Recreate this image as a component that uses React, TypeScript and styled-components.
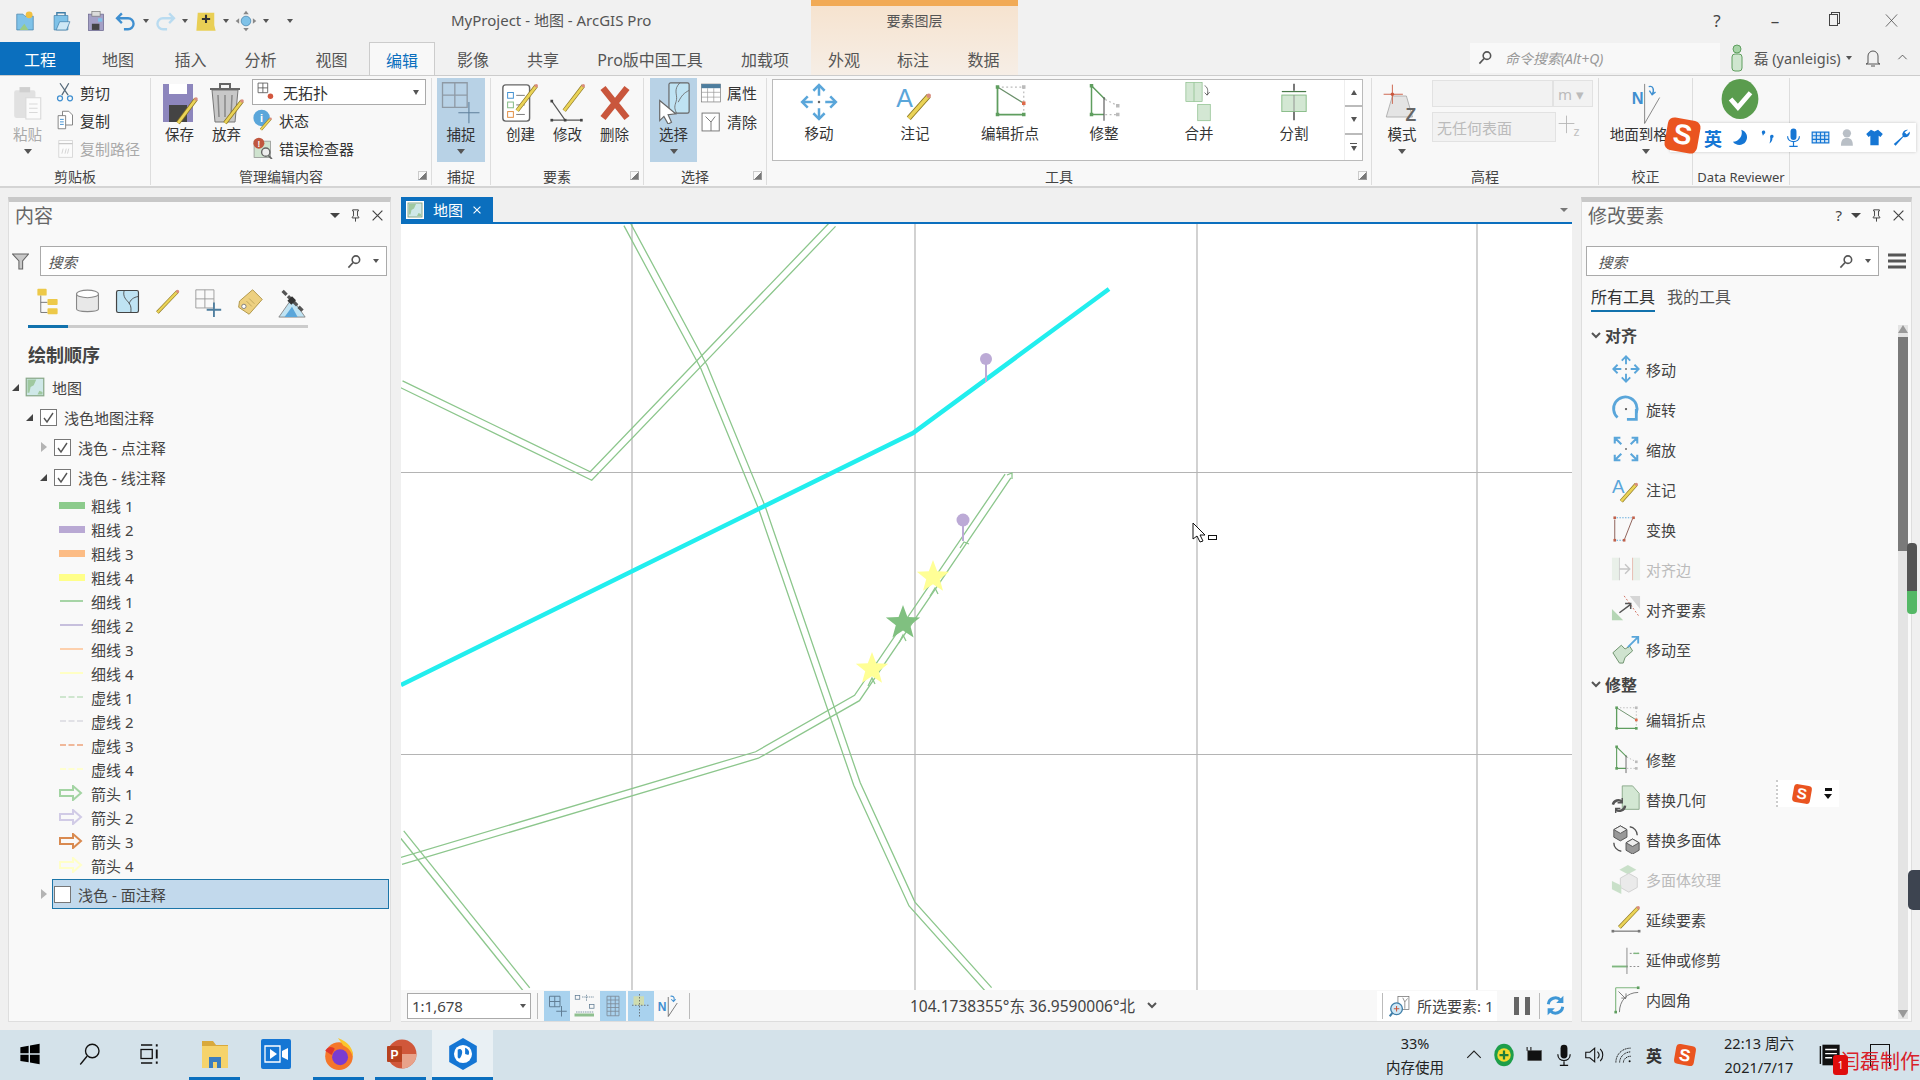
import React from 'react';
import styled, { createGlobalStyle } from 'styled-components';

const Global = createGlobalStyle`
	html, body { margin: 0; padding: 0; background: #f0f0f0; }
	* { box-sizing: border-box; }
	body { font-family: "Noto Sans", "Noto Sans CJK SC", sans-serif; color: #444; overflow: hidden; }
`;

const Screen = styled.div`
	position: relative;
	width: 1920px;
	height: 1080px;
	display: flex;
	flex-direction: column;
	overflow: hidden;
	background: #f0f0f0;
`;

const Gap = styled.span<{ $w: number }>`
	width: ${(p) => p.$w}px;
	flex: none;
`;

/* ---- drawings ---- */
const BLUE = '#5aa6da';
const GREEN = '#7fb77f';
const pen = (x1: number, y1: number, x2: number, y2: number) => (
	<g>
		<line x1={x1} y1={y1} x2={x2} y2={y2} stroke="#8a7420" strokeWidth="4.2" />
		<line x1={x1} y1={y1} x2={x2} y2={y2} stroke="#ead357" strokeWidth="2.8" />
		<circle cx={x2} cy={y2} r="1.8" fill="#d98d7e" />
	</g>
);
const node = (x: number, y: number, c = '#5f9e5f') => <rect x={x - 1.4} y={y - 1.4} width="2.8" height="2.8" fill={c} />;

const glyphs: Record<string, React.ReactNode> = {
	move: (
		<g stroke={BLUE} strokeWidth="2" fill="none">
			<path d="M16 3v8M16 21v8M3 16h8M21 16h8" />
			<path d="M11.5 7L16 2.5 20.5 7M11.5 25L16 29.5 20.5 25M7 11.5L2.5 16 7 20.5M25 11.5L29.5 16 25 20.5" />
			<circle cx="16" cy="16" r="1" fill="#666" stroke="none" />
		</g>
	),
	rotate: (
		<g fill="none" stroke={BLUE} strokeWidth="3">
			<path d="M7 25A12.5 12.5 0 1 1 27 20" />
			<path d="M27 16v11h-10" />
			<circle cx="16" cy="16" r="1.2" fill="#555" stroke="none" />
		</g>
	),
	scale: (
		<g fill="none" stroke={BLUE} strokeWidth="2.2">
			<path d="M4 10V4h6M4 4l7 7M22 4h6v6M28 4l-7 7M4 22v6h6M4 28l7-7M22 28h6v-6M28 28l-7-7" />
			<circle cx="16" cy="16" r="1" fill="#666" stroke="none" />
		</g>
	),
	note: (
		<g>
			<text x="1" y="20" fontSize="20" fill={BLUE}>A</text>
			{pen(11, 29, 27, 11)}
		</g>
	),
	warp: (
		<g fill="none">
			<path d="M4 6v22M23 5l-9 23" stroke="#8a5b52" strokeWidth="1" />
			<path d="M6 4h16M6 28h8" stroke={BLUE} strokeDasharray="1.5 1.5" />
			{node(4, 4, '#c0604a')}{node(24, 4, '#c0604a')}{node(4, 28, '#c0604a')}{node(14, 28, '#c0604a')}
		</g>
	),
	alignEdge: (
		<g opacity=".45">
			<rect x="1" y="4" width="8" height="24" fill="#d7e7d7" />
			<rect x="23" y="4" width="8" height="24" fill="#d7e7d7" />
			<path d="M9 4v24" stroke="#999" />
			<path d="M23 4v24" stroke="#d2705a" />
			<path d="M9 16h11M15 11l5 5-5 5" stroke="#888" fill="none" strokeWidth="1.5" />
		</g>
	),
	alignFeature: (
		<g>
			<path d="M1 16l12 12H1z" fill="#b5d6b5" />
			<path d="M20 2h11v14z" fill="#d6d6d6" />
			<path d="M14 2l16 22" stroke="#cf6a5a" strokeDasharray="2 2" fill="none" />
			<path d="M9 20l12-9M15 10h6v6" stroke="#555" strokeWidth="1.6" fill="none" />
		</g>
	),
	moveTo: (
		<g>
			<path d="M2 20l9-8 4 4 5-3 3 5-8 7-2 6h-4z" fill="#cfe3cf" stroke="#6a8f6a" />
			<path d="M18 14l11-11M22 3h7v7" stroke={BLUE} strokeWidth="2" fill="none" />
		</g>
	),
	vertices: (
		<g fill="none">
			<path d="M6 4v22h21" stroke="#5f9e5f" strokeWidth="1.4" />
			<path d="M6 4l21 13" stroke="#6a8f6a" />
			<path d="M6 4h21v22" stroke="#bbb" strokeDasharray="1.5 2" />
			{node(6, 4)}{node(6, 26)}{node(27, 26)}{node(27, 4, '#bbb')}{node(27, 17, '#de6a4a')}
		</g>
	),
	reshape: (
		<g fill="none">
			<path d="M6 3v23h10M6 3l11 11" stroke="#5f9e5f" strokeWidth="1.2" />
			<path d="M16 12v19" stroke="#666" />
			<path d="M17 14l10 5M17 26h10" stroke="#bbb" strokeDasharray="1.5 2" />
			{node(6, 3)}{node(6, 26)}{node(27, 26, '#bbb')}{node(27, 19, '#bbb')}
		</g>
	),
	replaceGeom: (
		<g>
			<path d="M12 2h11l7 8v17H12z" fill="#d3e7d3" stroke="#8aa98a" />
			<path d="M2 22a6 6 0 0 1 10-3M15 23a6 6 0 0 1-10 4" stroke="#555" strokeWidth="2.6" fill="none" />
			<path d="M12 15v5h-5M5 31v-5h5" stroke="#555" strokeWidth="1.5" fill="none" />
		</g>
	),
	cubes: (
		<g>
			<path d="M3 6l7-4 7 4v8l-7 4-7-4z" fill="#999" stroke="#555" />
			<path d="M3 6l7 4 7-4-7-4z" fill="#eee" stroke="#555" />
			<path d="M16 20l7-4 7 4v8l-7 4-7-4z" fill="#999" stroke="#555" />
			<path d="M16 20l7 4 7-4-7-4z" fill="#eee" stroke="#555" />
			<path d="M20 3a9 9 0 0 1 8 9M11 29a9 9 0 0 1-8-9" stroke="#555" strokeWidth="1.5" fill="none" />
		</g>
	),
	texture: (
		<g opacity=".5">
			<path d="M18 1l9 5-9 5-9-5z" fill="#9bc99b" />
			<path d="M10 15l9-5 9 5v10l-9 5-9-5z" fill="#ddd" stroke="#aaa" />
			<path d="M1 18l10 5v9L1 27z" fill="#9bc99b" />
		</g>
	),
	cont: (
		<g>
			<path d="M1 29h30" stroke="#888" strokeWidth="1.5" />
			{node(2, 29, '#777')}{node(30, 29, '#777')}
			{pen(9, 25, 29, 4)}
		</g>
	),
	extend: (
		<g fill="none">
			<path d="M1 24h17" stroke={GREEN} strokeWidth="2" />
			<path d="M17 4v28" stroke="#888" />
			<path d="M20 10h10M20 24h10" stroke="#888" strokeDasharray="2 2" />
			<path d="M24 10h6" stroke={GREEN} strokeWidth="1.5" />
		</g>
	),
	fillet: (
		<g fill="none">
			<path d="M5 4v26M5 4h24" stroke={GREEN} strokeWidth="1.2" />
			<path d="M9 30c0-12 8-21 20-21" stroke="#777" />
			<path d="M8 8l8 8M11 15h5v-5" stroke="#777" />
			{node(5, 30)}{node(29, 4)}
		</g>
	),
	qNew: (
		<g>
			<path d="M4 6h9l3 3h12v20H4z" fill="#7fc2e8" stroke="#3f7ea8" />
			<circle cx="22" cy="7" r="5" fill="#f0c040" />
			<path d="M8 29l7-9 6 9z" fill="#9acb86" />
		</g>
	),
	qOpen: (
		<g>
			<path d="M6 8h20v21H6z" fill="#7fc2e8" stroke="#3f7ea8" />
			<path d="M10 8V4h12v4" fill="none" stroke="#3f7ea8" strokeWidth="2" />
			<path d="M9 29l5-12h15l-5 12z" fill="#cfe8f6" stroke="#3f7ea8" />
		</g>
	),
	qSave: (
		<g>
			<rect x="5" y="6" width="22" height="24" fill="#a4a0c6" stroke="#68648c" />
			<rect x="10" y="2" width="12" height="7" fill="#dcdcdc" stroke="#777" />
			<rect x="10" y="20" width="11" height="9" fill="#444" />
			<rect x="19" y="12" width="6" height="5" fill="#7fc2e8" />
		</g>
	),
	undo: <path d="M4 12h15a8 8 0 0 1 0 16h-6M10 5L3 12l7 7" fill="none" stroke="#3f8fd0" strokeWidth="3.4" />,
	redo: <path d="M28 12H13a8 8 0 0 0 0 16h6M22 5l7 7-7 7" fill="none" stroke="#b9dbf0" strokeWidth="3.4" />,
	qAdd: (
		<g>
			<path d="M4 4h24v18l2 8H2z" fill="#e9cf55" />
			<path d="M16 7v12M10 13h12" stroke="#333" strokeWidth="3" />
		</g>
	),
	qNav: (
		<g>
			<circle cx="16" cy="16" r="7" fill="#7fc2e8" stroke="#3f7ea8" />
			<path d="M16 1l-4 5h8zM16 31l-4-5h8zM1 16l5-4v8zM31 16l-5-4v8z" fill="#888" />
		</g>
	),
	paste: (
		<g opacity=".5">
			<rect x="3" y="4" width="20" height="26" rx="2" fill="#ccc" />
			<rect x="8" y="1" width="10" height="5" fill="#aaa" />
			<path d="M14 11h14v20H14z" fill="#fff" stroke="#bbb" />
			<path d="M17 17h8M17 21h8M17 25h8" stroke="#bbb" />
		</g>
	),
	cut: (
		<g fill="none" stroke="#566a7a" strokeWidth="2">
			<path d="M8 2l13 19M22 2L11 21" />
			<circle cx="8" cy="26" r="4" stroke="#3f8fd0" />
			<circle cx="24" cy="26" r="4" stroke="#3f8fd0" />
		</g>
	),
	copy: (
		<g>
			<path d="M12 2h10l6 6v16H12z" fill="#fff" stroke="#777" strokeWidth="1.4" />
			<path d="M5 9h12v21H5z" fill="#fff" stroke="#777" strokeWidth="1.4" />
			<path d="M8 15h6M8 19h6M8 23h6" stroke="#3f8fd0" strokeWidth="1.5" />
		</g>
	),
	copyPath: (
		<g opacity=".5">
			<path d="M6 4h22v27H6z" fill="#fff" stroke="#999" />
			<path d="M6 9h22" stroke="#999" strokeWidth="2" />
			<path d="M11 25l2-8M16 25l2-8M20 25l2-8" stroke="#888" />
		</g>
	),
	save: (
		<g>
			<path d="M2 3h30v38H2z" fill="#8d86bd" />
			<rect x="8" y="3" width="18" height="10" fill="#fff" />
			<rect x="8" y="24" width="18" height="17" fill="#444" />
			{pen(17, 42, 35, 18)}
		</g>
	),
	discard: (
		<g>
			<path d="M4 9h26l-3 32H7z" fill="#c8c8c8" stroke="#777" />
			<path d="M2 8h30M12 8V3h10v5" stroke="#666" strokeWidth="2" fill="none" />
			<path d="M10 14l1 22M17 14v22M24 14l-1 22" stroke="#888" strokeWidth="1.5" />
			{pen(17, 42, 34, 20)}
		</g>
	),
	topo: (
		<g fill="none">
			<path d="M3 3h14v14H3zM3 10h14M10 3v14" stroke="#555" strokeWidth="1.2" />
			<circle cx="21" cy="22" r="4" fill="#d2573f" />
		</g>
	),
	status: (
		<g>
			<circle cx="14" cy="13" r="12" fill="#5aa6da" />
			<text x="14" y="19" textAnchor="middle" fontSize="16" fill="#fff" fontWeight="700">i</text>
			{pen(13, 30, 27, 14)}
		</g>
	),
	errInsp: (
		<g>
			<rect x="3" y="6" width="24" height="24" fill="#cfe3cf" stroke="#888" />
			<circle cx="10" cy="9" r="8" fill="#c0573f" />
			<text x="10" y="14" textAnchor="middle" fontSize="12" fill="#fff" fontWeight="700">!</text>
			<circle cx="20" cy="22" r="6" fill="#eee" stroke="#666" strokeWidth="2" />
			<path d="M24 27l5 5" stroke="#666" strokeWidth="2.5" />
		</g>
	),
	snap: (
		<g fill="none" stroke="#8e9aa5" strokeWidth="1.5">
			<path d="M2 2h28v28H2zM16 2v28M2 16h28" />
			<path d="M32 24v24M20 36h24" stroke="#5d7f9b" strokeWidth="1.2" />
		</g>
	),
	create: (
		<g>
			<rect x="1" y="3" width="28" height="38" rx="3" fill="#fff" stroke="#666" strokeWidth="1.5" />
			<rect x="6" y="11" width="6" height="6" fill="none" stroke="#3f8fd0" />
			<rect x="6" y="21" width="6" height="6" fill="none" stroke={GREEN} />
			<rect x="6" y="31" width="6" height="6" fill="none" stroke="#e08a3c" />
			<path d="M15 14h9M15 24h9M15 34h9" stroke="#777" />
			{pen(16, 30, 36, 4)}
		</g>
	),
	modify: (
		<g>
			<path d="M3 20l14 20h17M3 40h14" stroke="#555" strokeWidth="1.2" fill="none" />
			{node(3, 20, '#444')}{node(17, 40, '#444')}{node(34, 40, '#444')}{node(3, 40, '#444')}
			{pen(16, 30, 36, 4)}
		</g>
	),
	del: <path d="M6 6l24 30M30 6L6 36" stroke="#c9563c" strokeWidth="6.5" />,
	select: (
		<g>
			<rect x="13" y="1" width="24" height="36" rx="2" fill="#bfe3f3" stroke="#666" strokeWidth="1.4" />
			<path d="M26 1c-8 8-3 14-4 20s-4 8 0 16M37 10c-6 3-9 6-13 14" stroke="#666" fill="none" />
			<path d="M2 22l19 16-9 1 4 9-4 2-5-9-5 5z" fill="#fff" stroke="#666" strokeWidth="1.4" />
		</g>
	),
	attr: (
		<g>
			<rect x="2" y="3" width="28" height="26" fill="#fff" stroke="#777" />
			<rect x="2" y="3" width="28" height="6" fill="#4d7d9e" />
			<path d="M2 15h28M2 22h28M11 9v20M20 9v20" stroke="#999" />
		</g>
	),
	clear: (
		<g fill="none" stroke="#777" strokeWidth="1.4">
			<rect x="3" y="3" width="25" height="26" fill="#fff" />
			<path d="M8 8l8 8 6-8M16 16v13" />
		</g>
	),
	merge: (
		<g>
			<rect x="1" y="1" width="26" height="30" fill="#d3e7d3" stroke={GREEN} />
			<path d="M14 1v30" stroke={GREEN} />
			<rect x="20" y="36" width="20" height="26" fill="#d3e7d3" stroke={GREEN} />
			<path d="M31 6c5 2 6 8 4 15M31 17l4 4 4-5" stroke="#444" strokeWidth="1.2" fill="none" />
		</g>
	),
	split: (
		<g>
			<path d="M16 2v8M16 44v-10" stroke="#666" strokeWidth="2" />
			<path d="M2 11h28" stroke="#4a7a4a" strokeWidth="1.4" />
			<rect x="2" y="15" width="28" height="19" fill="#d3e7d3" stroke={GREEN} />
			<path d="M16 15v19" stroke="#888" />
		</g>
	),
	mode: (
		<g>
			<path d="M4 40L11 16h16l7 24z" fill="#e4e4e4" stroke="#aaa" />
			<path d="M11 3v22M1 14h22" stroke="#c9563c" />
			<circle cx="11" cy="14" r="2" fill="#c9563c" />
			<text x="32" y="44" fontSize="20" fontWeight="700" fill="#666" textAnchor="middle">Z</text>
		</g>
	),
	ground: (
		<g>
			<text x="1" y="32" fontSize="24" fontWeight="700" fill="#3f8fd0">N</text>
			<path d="M20 60V2M20 60L42 22" stroke="#555" fill="none" />
			<path d="M26 6c6-2 9 4 5 12M27 12l4 6 5-4" stroke="#3f8fd0" strokeWidth="2" fill="none" />
		</g>
	),
	check: (
		<g>
			<ellipse cx="18" cy="20" rx="17.5" ry="19" fill="#5a9c4e" />
			<path d="M9 20l7 8 12-14" stroke="#fff" strokeWidth="4.5" fill="none" />
		</g>
	),
	zSurface: (
		<g stroke="#999" fill="none" opacity=".7">
			<path d="M12 3v20M3 12h18" />
			<text x="20" y="26" fontSize="14" fill="#aaa" stroke="none">z</text>
		</g>
	),
	tree: (
		<g>
			<rect x="4" y="1" width="11" height="8" rx="1" fill="#edc949" />
			<path d="M8 9v20h8M8 17h8" stroke="#666" fill="none" />
			<rect x="16" y="13" width="12" height="7" rx="1" fill="#edc949" />
			<rect x="16" y="24" width="12" height="7" rx="1" fill="#edc949" />
		</g>
	),
	db: (
		<g fill="#fff" stroke="#888" strokeWidth="1.3">
			<path d="M3 7v18c0 4 26 4 26 0V7" fill="#e8e8e8" />
			<ellipse cx="16" cy="7" rx="13" ry="4.5" />
		</g>
	),
	mapTab: (
		<g>
			<rect x="3" y="3" width="26" height="26" rx="2" fill="#bfe3f3" stroke="#444" strokeWidth="1.4" />
			<path d="M12 3c-2 8 3 11 6 15s2 8 2 11M29 10c-6 1-10 4-11 9" stroke="#444" fill="none" />
		</g>
	),
	penTab: pen(4, 29, 28, 4),
	snapPlus: (
		<g>
			<path d="M2 2h20v20H2zM12 2v20M2 12h20" fill="none" stroke="#999" />
			<path d="M22 16v16M14 24h16" stroke="#4d7d9e" strokeWidth="2" />
		</g>
	),
	tag: (
		<g>
			<path d="M19 2l11 11-15 17L3 22l1-7z" fill="#edd080" stroke="#a98f3f" />
			<circle cx="9" cy="21" r="2.5" fill="#fff" stroke="#777" />
			<path d="M15 12l6 6M12 15l6 6" stroke="#b9a259" />
		</g>
	),
	sat: (
		<g>
			<path d="M2 31L16 11l14 20z" fill="#bfe3f3" stroke="#888" />
			<path d="M8 31l8-11 6 11z" fill="#5aa6da" />
			<path d="M6 3l22 22" stroke="#555" strokeWidth="3.5" strokeDasharray="6 2" />
			<rect x="13" y="10" width="6" height="7" transform="rotate(45 16 13)" fill="#333" />
		</g>
	),
	mapThumb: (
		<g>
			<rect x="2" y="2" width="28" height="28" fill="#cfe8e8" stroke="#8aa98a" strokeWidth="2" />
			<path d="M4 4h14l-4 9-5 3-2 9H4z" fill="#9fc89f" />
			<path d="M20 28l3-6 5 2v4z" fill="#9fc89f" />
		</g>
	),
	filter: <path d="M1 2h30L20 15v15h-7V15z" fill="#c8c8c8" stroke="#666" strokeWidth="2" />,
	search: (
		<g fill="none" stroke="#555" strokeWidth="3.4">
			<circle cx="19" cy="12" r="8" />
			<path d="M13 18L3 29" />
		</g>
	),
	pin: <path d="M9 2h14v3h-2v12l3 3v2H8v-2l3-3V5H9zM16 22v9" fill="#f5f5f5" stroke="#444" strokeWidth="2.4" />,
	close: <path d="M4 4l24 24M28 4L4 28" stroke="#444" strokeWidth="3" />,
	closeThin: <path d="M4 3l24 26M28 3L4 29" stroke="#444" strokeWidth="1.6" />,
	closeWhite: <path d="M5 5l22 22M27 5L5 27" stroke="#fff" strokeWidth="3.5" />,
	statSnap: (
		<g fill="none" stroke="#5f7b92" strokeWidth="1.3">
			<path d="M6 3h14v14H6zM13 3v14M6 10h14" />
			<path d="M22 16v14M15 23h14" />
		</g>
	),
	statInfer: (
		<g fill="none" stroke="#5f7b92">
			<rect x="3" y="2" width="6" height="5" />
			<rect x="22" y="14" width="6" height="5" />
			<path d="M12 4h16M18 1v8M4 24h24" strokeDasharray="2 1" />
			<rect x="2" y="26" width="26" height="4" fill="#8fc08f" stroke="none" />
		</g>
	),
	statGrid: <path d="M8 3h16v26H8zM8 8h16M8 13h16M8 18h16M8 23h16M13 3v26M19 3v26" fill="none" stroke="#7d8b96" strokeWidth="1.1" />,
	statGuide: (
		<g>
			<rect x="6" y="3" width="14" height="12" fill="#cfdcb0" />
			<path d="M14 0v32M4 15h24" stroke="#555" strokeDasharray="2 2" />
		</g>
	),
	statN: (
		<g>
			<text x="1" y="22" fontSize="16" fontWeight="700" fill="#3f8fd0">N</text>
			<path d="M15 30V4M15 30L27 12" stroke="#555" fill="none" />
			<path d="M18 3c5-1 6 3 4 7M19 7l3 3 3-3" stroke="#3f8fd0" strokeWidth="1.4" fill="none" />
		</g>
	),
	selected: (
		<g>
			<rect x="13" y="2" width="16" height="19" fill="#fff" stroke="#666" />
			<path d="M20 4l3 6 4-5M23 10v10" stroke="#666" fill="none" />
			<circle cx="11" cy="20" r="8.5" fill="#cfe8f6" stroke="#3f7ea8" strokeWidth="2" />
			<path d="M11 16v8M7 20h8" stroke="#c9563c" strokeWidth="1.5" />
			<path d="M5 26l-4 5" stroke="#3f7ea8" strokeWidth="3" />
		</g>
	),
	refresh: (
		<g fill="none" stroke="#3f97d6" strokeWidth="4.5">
			<path d="M5 14a11 11 0 0 1 19-6M27 18a11 11 0 0 1-19 6" />
			<path d="M28 1v11H17zM4 31V20h11z" fill="#3f97d6" stroke="none" />
		</g>
	),
	win: <path d="M2 6l12-2v11H2zM16 3.7L30 1v14H16zM2 17h12v11L2 26zM16 17h14v14l-14-2.700z" fill="#000" />,
	taskSearch: (
		<g fill="none" stroke="#111" strokeWidth="1.8">
			<circle cx="19" cy="12" r="9" />
			<path d="M12 19L3 30" />
		</g>
	),
	taskView: (
		<g fill="none" stroke="#111" strokeWidth="1.7">
			<path d="M4 4h15M4 28h15" />
			<rect x="4" y="10" width="15" height="12" />
			<path d="M25 3v3M25 10v12M25 26v3" strokeWidth="2.5" />
		</g>
	),
	explorer: (
		<g>
			<path d="M3 3h11l3 4h12v3H3z" fill="#d9a93c" />
			<rect x="3" y="8" width="26" height="22" fill="#f6d36b" />
			<path d="M10 30V19h12v11h-4v-6h-4v6z" fill="#3c7dbf" />
		</g>
	),
	zoomApp: (
		<g>
			<rect x="1" y="1" width="30" height="30" rx="2" fill="#1576d4" />
			<path d="M5 8h15v16H5z" fill="none" stroke="#fff" strokeWidth="1.3" />
			<path d="M10 11l7 5-7 5z" fill="#fff" />
			<path d="M22 13l6-3v12l-6-3z" fill="#fff" />
		</g>
	),
	firefox: (
		<g>
			<circle cx="16" cy="18" r="13" fill="#f5762a" />
			<path d="M15 1c9 3 15 10 14 18-1-5-4-9-9-11z" fill="#fbc62c" />
			<circle cx="17" cy="19" r="7.5" fill="#7b3cd0" />
			<path d="M3 13c3-5 7-4 9-2l-3 6z" fill="#e0362c" />
		</g>
	),
	ppt: (
		<g>
			<circle cx="17" cy="16" r="14.5" fill="#d0573a" />
			<path d="M17 16h14.5A14.5 14.5 0 0 1 17 30.5z" fill="#e8a28a" />
			<rect x="2" y="8" width="15" height="16" rx="1" fill="#b7411f" />
			<text x="9.5" y="21" fontSize="12" fontWeight="700" fill="#fff" textAnchor="middle">P</text>
		</g>
	),
	arc: (
		<g>
			<path d="M16 1l13 7.5v15L16 31 3 23.5v-15z" fill="#1576d4" />
			<circle cx="16" cy="16" r="8.5" fill="#fff" />
			<path d="M11 12c3-2 5 1 4 4s-2 6-4 3zM18 10c3 1 5 4 3 7l-3-1z" fill="#1576d4" />
		</g>
	),
	caret: <path d="M4 21L16 9l12 12" fill="none" stroke="#222" strokeWidth="2" />,
	guard: (
		<g>
			<ellipse cx="16" cy="16" rx="13" ry="15" fill="#1e9e4a" />
			<circle cx="16" cy="16" r="9" fill="#f3d92e" />
			<path d="M16 10v12M10 16h12" stroke="#1e7d3a" strokeWidth="3" />
		</g>
	),
	battery: (
		<g>
			<rect x="6" y="9" width="22" height="16" fill="#111" stroke="#555" />
			<path d="M5 3v6M11 3v6" stroke="#333" strokeWidth="2" />
		</g>
	),
	mic: (
		<g fill="none">
			<rect x="11" y="1" width="10" height="20" rx="5" fill="#111" />
			<path d="M7 15c0 12 18 12 18 0M16 25v6M10 31h12" stroke="#111" strokeWidth="1.8" />
		</g>
	),
	speaker: <path d="M4 12h6l7-6v20l-7-6H4zM21 11c3 3 3 7 0 10M25 7c5 5 5 13 0 18" fill="none" stroke="#111" strokeWidth="1.6" />,
	wifi: (
		<g fill="none" stroke="#111" strokeWidth="1.5" strokeDasharray="2 1">
			<path d="M3 28C3 15 13 5 27 5M9 28c0-9 8-17 18-17M15 28c0-5 5-10 12-10" />
			<circle cx="25" cy="26" r="1.6" fill="#111" stroke="none" />
		</g>
	),
	notif: (
		<g>
			<path d="M2 3v26" stroke="#111" strokeWidth="2" />
			<rect x="5" y="1" width="25" height="30" fill="#111" />
			<path d="M9 8h17M9 14h17M9 20h10" stroke="#fff" strokeWidth="2" />
		</g>
	),
	shirt: <path d="M10 3l6 3 6-3 8 7-4 5-3-2v16H9V13l-3 2-4-5z" fill="#1576d4" />,
	wrench: <path d="M27 3a8 8 0 0 0-9 11L3 27l3 3 13-15a8 8 0 0 0 11-9l-5 5-4-4z" fill="#1576d4" />,
	moon: <path d="M19 3a13 13 0 1 1-14 20A15 15 0 0 0 19 3z" fill="#1576d4" />,
	comma: <path d="M8 7a3 3 0 1 1 4 3l-2 3zM22 14a3 3 0 1 1 4 3c0 5-2 7-5 9 1-3 2-6 1-12z" fill="#1576d4" />,
	micBlue: (
		<g>
			<rect x="11" y="1" width="10" height="19" rx="5" fill="#1576d4" />
			<path d="M6 14c0 12 20 12 20 0M16 24v6M9 31h14" stroke="#1576d4" strokeWidth="2" fill="none" />
		</g>
	),
	keyboard: <path d="M2 7h28v18H2zM2 13h28M2 19h28M9 7v18M16 7v18M23 7v18" fill="#d6e8f7" stroke="#1576d4" strokeWidth="2" />,
	person: (
		<g fill="#b9bfc6">
			<circle cx="15" cy="9" r="7" />
			<path d="M5 30c0-9 3-13 10-13s10 4 10 13z" />
		</g>
	),
};

const Svg = styled.svg`
	display: block;
	flex: none;
	font-family: "Liberation Sans", sans-serif;
`;

const Icon = ({ name, w = 24, h, box = '0 0 32 32' }: { name: string; w?: number; h?: number; box?: string }) => (
	<Svg width={w} height={h ?? w} viewBox={box}>
		{glyphs[name]}
	</Svg>
);

/* ---- header ---- */
const Header = styled.div`
	display: flex;
	height: 75px;
	flex: none;
	background: #f1f1f1;
`;
const HeadLeft = styled.div`
	width: 811px;
	display: flex;
	flex-direction: column;
`;
const TopRow = styled.div`
	height: 42px;
	display: flex;
	align-items: center;
	padding-left: 14px;
`;
const QatSlot = styled.div<{ $w: number }>`
	width: ${(p) => p.$w}px;
	flex: none;
	display: flex;
	align-items: center;
	gap: 6px;
`;
const TinyDown = styled.span`
	flex: none;
	width: 0;
	height: 0;
	border-left: 3px solid transparent;
	border-right: 3px solid transparent;
	border-top: 4px solid #555;
`;
const Title = styled.div`
	margin: -4px 0 0 154px;
	font-size: 15px;
	color: #555;
	white-space: nowrap;
`;
const TabRow = styled.div`
	height: 33px;
	margin-top: auto;
	display: flex;
	font-size: 16px;
`;
const Tab = styled.div<{ $w: number; $active?: boolean; $primary?: boolean }>`
	width: ${(p) => p.$w}px;
	flex: none;
	display: flex;
	align-items: center;
	justify-content: center;
	white-space: nowrap;
	color: ${(p) => (p.$primary ? '#fff' : p.$active ? '#0b6fbe' : '#555')};
	background: ${(p) => (p.$primary ? '#0b6fbe' : p.$active ? '#f8f8f8' : 'transparent')};
	${(p) => p.$active && 'border: 1px solid #ccc; border-bottom: none; margin: 0 2px; height: 34px;'}
`;
const ContextCol = styled.div`
	width: 207px;
	display: flex;
	flex-direction: column;
	background: linear-gradient(#f6e3cf, #f6eee6);
	border-top: 6px solid #f1aa55;
`;
const ContextTitle = styled.div`
	height: 28px;
	display: flex;
	align-items: center;
	justify-content: center;
	font-size: 14px;
	color: #555;
`;
const HeadRight = styled.div`
	flex: 1;
	display: flex;
	flex-direction: column;
`;
const WinControls = styled.div`
	height: 40px;
	display: flex;
	justify-content: flex-end;
	align-items: center;
`;
const WinBtn = styled.div`
	width: 58px;
	display: flex;
	justify-content: center;
	align-items: center;
	font-size: 17px;
	color: #444;
`;
const MaxGlyph = styled.span`
	display: inline-block;
	width: 9px;
	height: 12px;
	border: 1px solid #444;
	box-shadow: 2px -2px 0 -1px #f1f1f1, 2px -2px 0 0 #444;
`;
const CommandRow = styled.div`
	height: 35px;
	display: flex;
	align-items: center;
	padding-left: 452px;
`;
const CommandBox = styled.div`
	width: 250px;
	height: 30px;
	background: #f8f8f8;
	display: flex;
	align-items: center;
	gap: 12px;
	padding-left: 8px;
	font-size: 14px;
	font-style: italic;
	color: #999;
`;
const UserName = styled.div`
	margin-left: 5px;
	font-size: 14.5px;
	color: #555;
	white-space: nowrap;
	display: flex;
	align-items: center;
	gap: 5px;
`;
const CollapseWrap = styled.div`
	margin-left: 13px;
	display: flex;
	align-items: center;
	gap: 16px;
`;

/* ---- ribbon ---- */
const Ribbon = styled.div`
	height: 113px;
	flex: none;
	display: flex;
	background: #f8f8f8;
	border-top: 1px solid #ccc;
	border-bottom: 2px solid #d4d4d4;
`;
const Group = styled.div<{ $w: number; $end?: boolean }>`
	position: relative;
	width: ${(p) => p.$w}px;
	flex: none;
	display: flex;
	flex-direction: column;
	margin-top: 2px;
	height: 107px;
	border-right: ${(p) => (p.$end ? 'none' : '1px solid #ddd')};
`;
const GroupBody = styled.div<{ $pad?: number }>`
	height: 84px;
	flex: none;
	display: flex;
	padding-left: ${(p) => p.$pad ?? 0}px;
`;
const GroupLabel = styled.div<{ $launcher?: boolean; $small?: boolean }>`
	margin-top: 5px;
	padding-right: ${(p) => (p.$launcher ? 20 : 0)}px;
	text-align: center;
	font-size: ${(p) => (p.$small ? 13 : 14)}px;
	line-height: 20px;
	color: #444;
	white-space: nowrap;
`;
const Launcher = styled.span`
	position: absolute;
	right: 4px;
	bottom: 5px;
	width: 9px;
	height: 9px;
	border: 1px solid #999;
	border-top-color: #ccc;
	border-left-color: #ccc;
	background: linear-gradient(135deg, transparent 55%, #777 55%);
`;
const BigBtn = styled.div<{ $w: number; $on?: boolean; $off?: boolean; $tight?: boolean }>`
	width: ${(p) => p.$w}px;
	height: ${(p) => (p.$tight ? 78 : 84)}px;
	flex: none;
	display: flex;
	flex-direction: column;
	align-items: center;
	padding-top: ${(p) => (p.$tight ? 0 : 3)}px;
	font-size: 14.5px;
	line-height: 20px;
	white-space: nowrap;
	color: ${(p) => (p.$off ? '#aaa' : '#333')};
	background: ${(p) => (p.$on ? '#b8d2e6' : 'transparent')};
`;
const BigIconSlot = styled.div`
	height: 43px;
	display: flex;
	align-items: center;
	justify-content: center;
`;
const DownMark = styled.span`
	margin-top: 5px;
	width: 0;
	height: 0;
	border-left: 4px solid transparent;
	border-right: 4px solid transparent;
	border-top: 5px solid #555;
`;
const SmallCol = styled.div<{ $left?: number }>`
	margin-left: ${(p) => p.$left ?? 0}px;
	display: flex;
	flex-direction: column;
`;
const SmallRow = styled.div<{ $off?: boolean }>`
	height: 29px;
	display: flex;
	align-items: center;
	gap: 5px;
	font-size: 15px;
	white-space: nowrap;
	color: ${(p) => (p.$off ? '#aaa' : '#333')};
`;
const TopoSelect = styled.div`
	width: 174px;
	height: 27px;
	margin: 1px 0;
	background: #fff;
	border: 1px solid #aaa;
	display: flex;
	align-items: center;
	padding: 0 6px 0 3px;
	gap: 5px;
	font-size: 15px;
	color: #333;
`;
const SelectArrow = styled.span`
	margin-left: auto;
	width: 0;
	height: 0;
	border-left: 3px solid transparent;
	border-right: 3px solid transparent;
	border-top: 5px solid #555;
`;
const Gallery = styled.div`
	margin: 1px 0 0 5px;
	width: 591px;
	height: 82px;
	display: flex;
	background: #fff;
	border: 1px solid #bbb;
`;
const GalleryItems = styled.div`
	flex: 1;
	display: flex;
`;
const GalleryScroll = styled.div`
	width: 18px;
	border-left: 1px solid #eee;
	display: flex;
	flex-direction: column;
`;
const GalleryStep = styled.div`
	flex: 1;
	display: flex;
	flex-direction: column;
	gap: 2px;
	align-items: center;
	justify-content: center;
	border-bottom: 2px solid #bbb;
	&:last-child { border-bottom: none; }
`;
const StepUp = styled.span`
	border-left: 3px solid transparent;
	border-right: 3px solid transparent;
	border-bottom: 5px solid #555;
`;
const StepDown = styled.span`
	border-left: 3px solid transparent;
	border-right: 3px solid transparent;
	border-top: 5px solid #555;
`;
const StepBar = styled.span`
	width: 7px;
	border-top: 1px solid #555;
`;
const ElevCol = styled.div`
	display: flex;
	flex-direction: column;
	gap: 5px;
	margin-left: 4px;
	padding-top: 2px;
`;
const FieldRow = styled.div`
	display: flex;
	align-items: center;
`;
const Disabled = styled.div<{ $w: number; $h: number }>`
	width: ${(p) => p.$w}px;
	height: ${(p) => p.$h}px;
	background: #f2f2f2;
	border: 1px solid #e2e2e2;
	padding-left: 4px;
	display: flex;
	align-items: center;
	font-size: 15px;
	color: #bbb;
`;

/* ---- work area ---- */
const Work = styled.div`
	flex: 1;
	min-height: 0;
	display: flex;
	gap: 10px;
	padding: 9px 8px 8px 8px;
`;
const Pane = styled.div<{ $w: number }>`
	width: ${(p) => p.$w}px;
	flex: none;
	display: flex;
	flex-direction: column;
	background: #f9f9f9;
	border: 1px solid #dedede;
	border-top: 5px solid #c8c8c8;
	min-height: 0;
`;
const PaneHead = styled.div`
	height: 26px;
	flex: none;
	display: flex;
	align-items: center;
	padding: 0 6px;
	font-size: 19px;
	color: #666;
`;
const PaneActions = styled.div`
	margin-left: auto;
	display: flex;
	align-items: center;
	gap: 9px;
	color: #444;
	font-size: 15px;
`;
const PaneDown = styled.span`
	width: 0;
	height: 0;
	border-left: 5px solid transparent;
	border-right: 5px solid transparent;
	border-top: 5px solid #444;
`;
const SearchRow = styled.div`
	height: 30px;
	flex: none;
	display: flex;
	align-items: center;
	margin-top: 18px;
`;
const SearchBox = styled.div<{ $w: number; $pad: number }>`
	width: ${(p) => p.$w}px;
	height: 30px;
	background: #fff;
	border: 1px solid #aaa;
	display: flex;
	align-items: center;
	padding-left: ${(p) => p.$pad}px;
	font-size: 14.5px;
	font-style: italic;
	color: #555;
`;
const SearchTail = styled.div`
	margin-left: auto;
	margin-right: 7px;
	display: flex;
	align-items: center;
	gap: 11px;
`;
const ViewIcons = styled.div`
	margin: 12px 0 0 19px;
	width: 280px;
	height: 40px;
	flex: none;
	display: flex;
	gap: 13px;
	padding: 0 6px;
	border-bottom: 3px solid #ccc;
	position: relative;
`;
const ViewMark = styled.span`
	position: absolute;
	left: 0;
	bottom: -3px;
	width: 40px;
	height: 3px;
	background: #1272ad;
`;
const Heading = styled.div`
	margin: 14px 0 0 19px;
	font-size: 18px;
	font-weight: 700;
	line-height: 26px;
	color: #444;
	flex: none;
`;
const Tree = styled.div`
	margin-top: 4px;
	flex: 1;
	display: flex;
	flex-direction: column;
`;
const TreeRow = styled.div<{ $h: number; $indent: number }>`
	height: ${(p) => p.$h}px;
	flex: none;
	display: flex;
	align-items: center;
	padding-left: ${(p) => p.$indent}px;
	font-size: 15px;
	color: #444;
	white-space: nowrap;
`;
const LegendList = styled.div`
	margin-top: 1px;
	display: flex;
	flex-direction: column;
`;
const SelectedBox = styled.div`
	flex: 1;
	height: 30px;
	margin: 0 1px 0 5px;
	display: flex;
	align-items: center;
	background: #c2d9ec;
	border: 1px solid #1c75a8;
	padding-left: 1px;
`;
const Arrow = styled.span<{ $open?: boolean }>`
	width: 0;
	height: 0;
	flex: none;
	${(p) =>
		p.$open
			? 'border-left: 7px solid transparent; border-bottom: 7px solid #444;'
			: 'border-top: 5px solid transparent; border-bottom: 5px solid transparent; border-left: 6px solid #b4b4b4;'}
`;
const Check = styled.span<{ $flush?: boolean }>`
	width: 17px;
	height: 17px;
	flex: none;
	margin: 0 7px 0 ${(p) => (p.$flush ? 0 : 7)}px;
	background: #fff;
	border: 1px solid #777;
	display: flex;
	align-items: center;
	justify-content: center;
`;
const SwatchBox = styled.div`
	width: 32px;
	flex: none;
	display: flex;
	align-items: center;
`;
const Thick = styled.span<{ $c: string }>`
	width: 26px;
	height: 7px;
	background: ${(p) => p.$c};
`;
const Thin = styled.span<{ $c: string; $dash?: boolean }>`
	width: 23px;
	margin-left: 1px;
	border-top: 2px ${(p) => (p.$dash ? 'dashed' : 'solid')} ${(p) => p.$c};
`;

const MapCol = styled.div`
	width: 1171px;
	flex: none;
	display: flex;
	flex-direction: column;
	margin-right: -1px;
`;
const DocTabs = styled.div`
	height: 27px;
	flex: none;
	display: flex;
	align-items: flex-start;
	justify-content: space-between;
	border-bottom: 2px solid #0b6fbe;
`;
const DocTab = styled.div`
	width: 92px;
	height: 25px;
	display: flex;
	align-items: center;
	background: #0b6fbe;
	color: #fff;
	font-size: 15px;
	padding-left: 5px;
	gap: 9px;
`;
const DocThumb = styled.span`
	background: #fff;
	display: flex;
	padding: 1px;
`;
const DocMenu = styled.span`
	margin: 11px 4px 0 0;
	width: 0;
	height: 0;
	border-left: 4px solid transparent;
	border-right: 4px solid transparent;
	border-top: 4px solid #777;
`;
const MapView = styled.svg`
	display: block;
	flex: none;
	background: #fff;
`;
const StatusBar = styled.div`
	height: 32px;
	flex: none;
	display: flex;
	align-items: center;
	padding-left: 6px;
	background: #f8f8f8;
	border-bottom: 1px solid #ddd;
	font-size: 15px;
	color: #444;
	white-space: nowrap;
`;
const ScaleBox = styled.div`
	width: 124px;
	height: 26px;
	flex: none;
	background: #fff;
	border: 1px solid #aaa;
	display: flex;
	align-items: center;
	justify-content: space-between;
	padding: 0 4px;
	margin-right: 1px;
`;
const StatSep = styled.span`
	width: 1px;
	height: 26px;
	flex: none;
	background: #bbb;
	margin: 0 5px;
`;
const StatTool = styled.span<{ $on?: boolean; $first?: boolean }>`
	width: 26px;
	height: 30px;
	flex: none;
	display: flex;
	align-items: center;
	justify-content: center;
	margin: 0 2px 0 ${(p) => (p.$first ? 1 : 0)}px;
	background: ${(p) => (p.$on ? '#a9d2ee' : 'transparent')};
`;
const Coords = styled.div`
	margin-left: 215px;
	width: 250px;
	flex: none;
	display: flex;
	align-items: center;
	gap: 12px;
	font-size: 15.5px;
`;
const SelCount = styled.div`
	margin-left: 217px;
	flex: none;
	display: flex;
	align-items: center;
	gap: 6px;
	background: #fff;
	height: 30px;
	padding-right: 3px;
	margin-right: 6px;
`;
const SelSep = styled(StatSep)`
	margin-right: 0;
`;
const Pause = styled.span`
	width: 16px;
	height: 18px;
	flex: none;
	margin: 0 4px 0 11px;
	border-left: 5px solid #666;
	border-right: 5px solid #666;
`;

const Tabs2 = styled.div`
	display: flex;
	margin: 8px 0 0 9px;
	height: 30px;
	flex: none;
	font-size: 16px;
	gap: 12px;
`;
const Tab2 = styled.div<{ $on?: boolean }>`
	height: 28px;
	line-height: 27px;
	color: ${(p) => (p.$on ? '#333' : '#555')};
	border-bottom: ${(p) => (p.$on ? '2px solid #1272ad' : 'none')};
`;
const ToolScroll = styled.div`
	flex: 1;
	display: flex;
	min-height: 0;
	margin-top: 7px;
`;
const ToolList = styled.div`
	flex: 1;
	display: flex;
	flex-direction: column;
`;
const Section = styled.div<{ $h: number }>`
	height: ${(p) => p.$h}px;
	flex: none;
	display: flex;
	align-items: center;
	gap: 4px;
	padding-left: 9px;
	font-size: 16px;
	font-weight: 700;
	color: #444;
`;
const ToolRow = styled.div<{ $off?: boolean }>`
	height: 40px;
	flex: none;
	display: flex;
	align-items: center;
	gap: 5px;
	padding-left: 29px;
	font-size: 15px;
	color: ${(p) => (p.$off ? '#bbb' : '#444')};
`;
const Rail = styled.div`
	width: 10px;
	margin: 4px 3px 2px 0;
	flex: none;
	display: flex;
	flex-direction: column;
	align-items: center;
	background: #e4e4e4;
	position: relative;
	padding-top: 12px;
`;
const RailThumb = styled.div`
	width: 10px;
	height: 214px;
	background: #7a7a7a;
`;
const RailUp = styled.span`
	position: absolute;
	top: 0;
	left: 0;
	border-left: 5px solid transparent;
	border-right: 5px solid transparent;
	border-bottom: 8px solid #999;
`;
const RailDown = styled.span`
	position: absolute;
	bottom: 1px;
	left: 0;
	border-left: 5px solid transparent;
	border-right: 5px solid transparent;
	border-top: 8px solid #999;
`;

/* ---- taskbar ---- */
const Taskbar = styled.div`
	height: 50px;
	flex: none;
	display: flex;
	align-items: center;
	background: #d4e2ea;
	position: relative;
`;
const TaskSlot = styled.div<{ $w: number; $ml?: number; $run?: boolean; $cur?: boolean }>`
	width: ${(p) => p.$w}px;
	margin-left: ${(p) => p.$ml ?? 0}px;
	height: 50px;
	flex: none;
	display: flex;
	align-items: center;
	justify-content: center;
	background: ${(p) => (p.$cur ? '#e9f0f4' : 'transparent')};
	border-bottom: 3px solid ${(p) => (p.$run ? '#0b6fbe' : 'transparent')};
`;
const Tray = styled.div`
	margin-left: auto;
	display: flex;
	align-items: center;
	font-size: 14.5px;
	color: #222;
`;
const TrayText = styled.div<{ $w: number }>`
	width: ${(p) => p.$w}px;
	text-align: center;
	line-height: 24px;
	flex: none;
`;
const TraySlot = styled.div`
	width: 30px;
	flex: none;
	display: flex;
	justify-content: center;
	align-items: center;
	font-size: 16px;
	font-weight: 700;
	color: #333;
`;
const SogouS = styled.span<{ $size: number }>`
	width: ${(p) => p.$size}px;
	height: ${(p) => p.$size}px;
	flex: none;
	display: flex;
	align-items: center;
	justify-content: center;
	border-radius: 20%;
	transform: rotate(10deg);
	background: #ea5420;
	color: #fff;
	font-family: "Liberation Sans", sans-serif;
	font-weight: 700;
	font-size: ${(p) => p.$size * 0.85}px;
	line-height: 1;
`;
const DeskBox = styled.span`
	margin: 0 30px 0 29px;
	width: 20px;
	height: 22px;
	border: 1px solid #111;
	border-bottom: none;
`;

/* ---- floating things ---- */
const SogouBar = styled.div`
	position: absolute;
	left: 1670px;
	top: 123px;
	width: 246px;
	height: 29px;
	background: #fff;
	box-shadow: 0 0 3px rgba(0, 0, 0, 0.2);
	display: flex;
	align-items: center;
	gap: 8px;
	padding-left: 34px;
	color: #1576d4;
	font-weight: 700;
	font-size: 18px;
`;
const SogouBadge = styled.div`
	position: absolute;
	left: -4px;
	top: -4px;
`;
const SogouMini = styled.div`
	position: absolute;
	left: 1776px;
	top: 780px;
	width: 63px;
	height: 27px;
	background: #fff;
	border-left: 2px dotted #ccc;
	display: flex;
	align-items: center;
	padding-left: 15px;
	gap: 13px;
`;
const MiniMenu = styled.span`
	display: flex;
	flex-direction: column;
	align-items: center;
	gap: 3px;
`;
const MiniBar = styled.span`
	width: 7px;
	height: 3px;
	background: #111;
`;
const MiniDown = styled.span`
	border-left: 4px solid transparent;
	border-right: 4px solid transparent;
	border-top: 5px solid #111;
`;
const Handle = styled.div`
	position: absolute;
	left: 1907px;
	top: 543px;
	width: 10px;
	height: 71px;
	border-radius: 4px;
	background: linear-gradient(#555 68%, #55b866 68%);
`;
const DarkTab = styled.div`
	position: absolute;
	right: 0;
	top: 870px;
	width: 12px;
	height: 40px;
	border-radius: 5px 0 0 5px;
	background: #3d4450;
`;
const Mark = styled.div`
	position: absolute;
	left: 1840px;
	top: 1048px;
	font-size: 20px;
	color: #d8212b;
	white-space: nowrap;
	line-height: 28px;
`;
const RedBadge = styled.div`
	position: absolute;
	left: 1833px;
	top: 1055px;
	width: 15px;
	height: 20px;
	background: #e00d0d;
	border-radius: 3px;
	color: #fff;
	font-size: 10px;
	text-align: center;
	line-height: 20px;
`;

/* ---- data ---- */
const mainTabs: [string, number][] = [['地图', 76], ['插入', 69], ['分析', 71], ['视图', 71], ['编辑', 66], ['影像', 72], ['共享', 68], ['Pro版中国工具', 146], ['加载项', 84]];
const gallery: [string, string, number, number, number, string][] = [
	['move', '移动', 92, 40, 40, '0 0 32 32'],
	['note', '注记', 100, 40, 40, '0 0 32 32'],
	['vertices', '编辑折点', 90, 40, 40, '0 0 32 32'],
	['reshape', '修整', 98, 40, 40, '0 0 32 32'],
	['merge', '合并', 92, 28, 40, '0 0 44 64'],
	['split', '分割', 98, 28, 40, '0 0 32 46'],
];
const swatches: [string, string, string][] = [
	['thick', '粗线 1', '#8ccb8c'], ['thick', '粗线 2', '#b9a9d4'], ['thick', '粗线 3', '#fcbc85'], ['thick', '粗线 4', '#ffff8a'],
	['thin', '细线 1', '#a6d4a6'], ['thin', '细线 2', '#c7c0dd'], ['thin', '细线 3', '#fdd0ad'], ['thin', '细线 4', '#ffffc4'],
	['dash', '虚线 1', '#cfe6cf'], ['dash', '虚线 2', '#e1e1e6'], ['dash', '虚线 3', '#f0b89a'], ['dash', '虚线 4', '#ffffd0'],
	['arrow', '箭头 1', '#a3d4a3'], ['arrow', '箭头 2', '#d1cbe6'], ['arrow', '箭头 3', '#d98a50'], ['arrow', '箭头 4', '#ffffc8'],
];
const alignTools: [string, string, boolean?][] = [
	['move', '移动'], ['rotate', '旋转'], ['scale', '缩放'], ['note', '注记'], ['warp', '变换'], ['alignEdge', '对齐边', true], ['alignFeature', '对齐要素'], ['moveTo', '移动至'],
];
const reshapeTools: [string, string, boolean?][] = [
	['vertices', '编辑折点'], ['reshape', '修整'], ['replaceGeom', '替换几何'], ['cubes', '替换多面体'], ['texture', '多面体纹理', true], ['cont', '延续要素'], ['extend', '延伸或修剪'], ['fillet', '内圆角'],
];

type Pt = [number, number];
const offsetLine = (pts: Pt[], d: number) => {
	const normal = (a: Pt, b: Pt): Pt => {
		const l = Math.hypot(b[0] - a[0], b[1] - a[1]);
		return [(b[1] - a[1]) / l, -(b[0] - a[0]) / l];
	};
	return pts
		.map((p, i) => {
			const n1 = i > 0 ? normal(pts[i - 1], p) : normal(p, pts[i + 1]);
			const n2 = i < pts.length - 1 ? normal(p, pts[i + 1]) : n1;
			const mx = n1[0] + n2[0];
			const my = n1[1] + n2[1];
			const k = (2 * d) / (mx * mx + my * my);
			return `${p[0] + mx * k},${p[1] + my * k}`;
		})
		.join(' ');
};
const rails: Pt[][] = [
	[[627, 224], [704, 367], [762, 508], [857, 784], [912, 904], [989, 990]],
	[[401, 384], [591, 476], [833, 224]],
	[[401, 861], [757, 755], [857, 698], [1008, 476]],
	[[401, 833], [527, 990]],
];
const star = (cx: number, cy: number, r: number) =>
	Array.from({ length: 10 }, (_, i) => {
		const a = (-90 + i * 36) * (Math.PI / 180);
		const q = i % 2 ? r * 0.42 : r;
		return `${cx + q * Math.cos(a)},${cy + q * Math.sin(a)}`;
	}).join(' ');

const ArrowSwatch = ({ c }: { c: string }) => (
	<Svg width="24" height="16" viewBox="0 0 24 16">
		<path d="M1 5h13V1l8 7-8 7v-4H1z" fill="none" stroke={c} strokeWidth="2" />
	</Svg>
);

const MapDrawing = () => (
	<MapView width="1171" height="766" viewBox="401 224 1171 766">
		<g stroke="#b4b4b4" strokeWidth="1.2">
			<path d="M632 224V990M915 224V990M1197 224V990M1477 224V990M401 472.5H1572M401 754.5H1572" />
		</g>
		<g fill="none" stroke="#8cc68c" strokeWidth="1.3">
			{rails.map((r, i) => (
				<g key={i}>
					<polyline points={offsetLine(r, 3.5)} />
					<polyline points={offsetLine(r, -3.5)} />
				</g>
			))}
			<path d="M1007 475l5-2 0 6M960 548l4-6 5 2M930 596l5-8 3 6M899 643l4-8 3 6M868 686l4-8 3 6" />
		</g>
		<polyline points="401,685 913,433 1109,289" fill="none" stroke="#22eeee" strokeWidth="4.5" />
		<g stroke="#bcaad6" strokeWidth="2" fill="#bcaad6">
			<path d="M986 359V382M963 520V541" />
			<circle cx="986" cy="359" r="6" stroke="none" />
			<circle cx="963" cy="520" r="6.5" stroke="none" />
		</g>
		<polygon points={star(933, 577, 17)} fill="#ffff96" />
		<polygon points={star(872, 669, 17)} fill="#ffff96" />
		<polygon points={star(903, 623, 18)} fill="#80c080" />
		<path d="M1193 523l0 16 4-3 3 6 3-1-3-6h5z" fill="#fff" stroke="#111" />
		<rect x="1208.5" y="535.5" width="8" height="4" fill="#fff" stroke="#111" />
	</MapView>
);

const Big = ({ icon, label, w, iw, ih, box, on, arrow, off, tight }: { icon: string; label: string; w: number; iw: number; ih?: number; box?: string; on?: boolean; arrow?: boolean; off?: boolean; tight?: boolean }) => (
	<BigBtn $w={w} $on={on} $off={off} $tight={tight}>
		<BigIconSlot>
			<Icon name={icon} w={iw} h={ih} box={box} />
		</BigIconSlot>
		{label}
		{arrow && <DownMark />}
	</BigBtn>
);

const Tick = () => (
	<Svg width="13" height="13" viewBox="0 0 13 13">
		<path d="M2 7l3 4 6-9" fill="none" stroke="#555" strokeWidth="1.4" />
	</Svg>
);

const Chevron = () => (
	<Svg width="10" height="7" viewBox="0 0 10 7">
		<path d="M1 1l4 4 4-4" fill="none" stroke="#555" strokeWidth="2" />
	</Svg>
);

const App: React.FC = () => (
	<Screen>
		<Global />
		<Header>
			<HeadLeft>
				<TopRow>
					<QatSlot $w={36}><Icon name="qNew" w={22} /></QatSlot>
					<QatSlot $w={35}><Icon name="qOpen" w={22} /></QatSlot>
					<QatSlot $w={30}><Icon name="qSave" w={22} /></QatSlot>
					<QatSlot $w={39}><Icon name="undo" w={22} /><TinyDown /></QatSlot>
					<QatSlot $w={41}><Icon name="redo" w={22} /><TinyDown /></QatSlot>
					<QatSlot $w={40}><Icon name="qAdd" w={22} /><TinyDown /></QatSlot>
					<QatSlot $w={52}><Icon name="qNav" w={22} /><TinyDown /></QatSlot>
					<QatSlot $w={10}><TinyDown /></QatSlot>
					<Title>MyProject - 地图 - ArcGIS Pro</Title>
				</TopRow>
				<TabRow>
					<Tab $w={80} $primary>工程</Tab>
					{mainTabs.map(([t, w]) => (
						<Tab key={t} $w={w} $active={t === '编辑'}>{t}</Tab>
					))}
				</TabRow>
			</HeadLeft>
			<ContextCol>
				<ContextTitle>要素图层</ContextTitle>
				<TabRow>
					<Tab $w={66}>外观</Tab>
					<Tab $w={72}>标注</Tab>
					<Tab $w={69}>数据</Tab>
				</TabRow>
			</ContextCol>
			<HeadRight>
				<WinControls>
					<WinBtn>?</WinBtn>
					<WinBtn>–</WinBtn>
					<WinBtn><MaxGlyph /></WinBtn>
					<WinBtn><Icon name="closeThin" w={15} /></WinBtn>
				</WinControls>
				<CommandRow>
					<CommandBox>
						<Icon name="search" w={15} />
						命令搜索(Alt+Q)
					</CommandBox>
					<UserName>
						<Svg width="24" height="30" viewBox="0 0 24 30">
							<circle cx="12" cy="6" r="4" fill="#a6d4a6" stroke="#5f9e5f" />
							<rect x="7" y="11" width="10" height="17" rx="3" fill="#cfe6cf" stroke="#5f9e5f" />
						</Svg>
						磊 (yanleigis) <TinyDown />
					</UserName>
					<CollapseWrap>
						<Svg width="16" height="20" viewBox="0 0 16 20">
							<path d="M3 15V8a5 5 0 0 1 10 0v7l2 1H1zM6 18h4" fill="none" stroke="#555" />
						</Svg>
						<Icon name="caret" w={11} />
					</CollapseWrap>
				</CommandRow>
			</HeadRight>
		</Header>

		<Ribbon>
			<Group $w={151}>
				<GroupBody $pad={8}>
					<Big icon="paste" label="粘贴" w={39} iw={34} off arrow />
					<SmallCol $left={8}>
						<SmallRow><Icon name="cut" w={20} />剪切</SmallRow>
						<SmallRow><Icon name="copy" w={20} />复制</SmallRow>
						<SmallRow $off><Icon name="copyPath" w={20} />复制路径</SmallRow>
					</SmallCol>
				</GroupBody>
				<GroupLabel>剪贴板</GroupLabel>
			</Group>
			<Group $w={281}>
				<GroupBody $pad={5}>
					<Big icon="save" label="保存" w={47} iw={38} ih={44} box="0 0 38 44" />
					<Big icon="discard" label="放弃" w={47} iw={38} ih={44} box="0 0 38 44" />
					<SmallCol $left={2}>
						<TopoSelect><Icon name="topo" w={22} />无拓扑<SelectArrow /></TopoSelect>
						<SmallRow><Icon name="status" w={22} />状态</SmallRow>
						<SmallRow><Icon name="errInsp" w={22} />错误检查器</SmallRow>
					</SmallCol>
				</GroupBody>
				<GroupLabel $launcher>管理编辑内容</GroupLabel>
				<Launcher />
			</Group>
			<Group $w={59}>
				<GroupBody $pad={5}>
					<Big icon="snap" label="捕捉" w={48} iw={46} ih={44} box="0 0 46 50" on arrow />
				</GroupBody>
				<GroupLabel>捕捉</GroupLabel>
			</Group>
			<Group $w={153}>
				<GroupBody $pad={6}>
					<Big icon="create" label="创建" w={47} iw={40} ih={42} box="0 0 40 44" />
					<Big icon="modify" label="修改" w={47} iw={40} ih={42} box="0 0 40 44" />
					<Big icon="del" label="删除" w={47} iw={36} ih={42} box="0 0 36 42" />
				</GroupBody>
				<GroupLabel $launcher>要素</GroupLabel>
				<Launcher />
			</Group>
			<Group $w={123}>
				<GroupBody $pad={6}>
					<Big icon="select" label="选择" w={47} iw={38} ih={42} box="0 0 38 50" on arrow />
					<SmallCol $left={3}>
						<SmallRow><Icon name="attr" w={22} />属性</SmallRow>
						<SmallRow><Icon name="clear" w={22} />清除</SmallRow>
					</SmallCol>
				</GroupBody>
				<GroupLabel $launcher>选择</GroupLabel>
				<Launcher />
			</Group>
			<Group $w={605}>
				<GroupBody>
					<Gallery>
						<GalleryItems>
							{gallery.map(([icon, label, w, iw, ih, box]) => (
								<Big key={label} icon={icon} label={label} w={w} iw={iw} ih={ih} box={box} tight />
							))}
						</GalleryItems>
						<GalleryScroll>
							<GalleryStep><StepUp /></GalleryStep>
							<GalleryStep><StepDown /></GalleryStep>
							<GalleryStep><StepBar /><StepDown /></GalleryStep>
						</GalleryScroll>
					</Gallery>
				</GroupBody>
				<GroupLabel $launcher>工具</GroupLabel>
				<Launcher />
			</Group>
			<Group $w={227}>
				<GroupBody $pad={4}>
					<Big icon="mode" label="模式" w={52} iw={42} ih={42} box="0 0 44 48" arrow />
					<ElevCol>
						<FieldRow>
							<Disabled $w={121} $h={27} />
							<Disabled $w={40} $h={27}>m ▾</Disabled>
						</FieldRow>
						<FieldRow>
							<Disabled $w={124} $h={30}>无任何表面</Disabled>
							<Icon name="zSurface" w={28} />
						</FieldRow>
					</ElevCol>
				</GroupBody>
				<GroupLabel>高程</GroupLabel>
			</Group>
			<Group $w={94}>
				<GroupBody $pad={11}>
					<Big icon="ground" label="地面到格网" w={72} iw={30} ih={42} box="0 0 44 60" arrow />
				</GroupBody>
				<GroupLabel>校正</GroupLabel>
			</Group>
			<Group $w={97}>
				<GroupBody $pad={28}>
					<Icon name="check" w={38} h={42} box="0 0 36 40" />
				</GroupBody>
				<GroupLabel $small>Data Reviewer</GroupLabel>
			</Group>
		</Ribbon>

		<Work>
			<Pane $w={383}>
				<PaneHead>
					内容
					<PaneActions>
						<PaneDown />
						<Icon name="pin" w={13} />
						<Icon name="close" w={13} />
					</PaneActions>
				</PaneHead>
				<SearchRow>
					<Gap $w={3} />
					<Icon name="filter" w={17} />
					<Gap $w={11} />
					<SearchBox $w={347} $pad={7}>
						搜索
						<SearchTail><Icon name="search" w={15} /><TinyDown /></SearchTail>
					</SearchBox>
				</SearchRow>
				<ViewIcons>
					<Icon name="tree" w={27} />
					<Icon name="db" w={27} />
					<Icon name="mapTab" w={27} />
					<Icon name="penTab" w={27} />
					<Icon name="snapPlus" w={29} />
					<Icon name="tag" w={28} />
					<Icon name="sat" w={30} />
					<ViewMark />
				</ViewIcons>
				<Heading>绘制顺序</Heading>
				<Tree>
					<TreeRow $h={30} $indent={3}>
						<Arrow $open />
						<Gap $w={6} />
						<Icon name="mapThumb" w={20} />
						<Gap $w={7} />
						地图
					</TreeRow>
					<TreeRow $h={30} $indent={17}>
						<Arrow $open />
						<Check><Tick /></Check>浅色地图注释
					</TreeRow>
					<TreeRow $h={30} $indent={32}>
						<Arrow />
						<Check><Tick /></Check>浅色 - 点注释
					</TreeRow>
					<TreeRow $h={30} $indent={31}>
						<Arrow $open />
						<Check><Tick /></Check>浅色 - 线注释
					</TreeRow>
					<LegendList>
						{swatches.map(([kind, label, c]) => (
							<TreeRow key={label} $h={24} $indent={50}>
								<SwatchBox>
									{kind === 'thick' && <Thick $c={c} />}
									{kind === 'thin' && <Thin $c={c} />}
									{kind === 'dash' && <Thin $c={c} $dash />}
									{kind === 'arrow' && <ArrowSwatch c={c} />}
								</SwatchBox>
								{label}
							</TreeRow>
						))}
					</LegendList>
					<TreeRow $h={34} $indent={32}>
						<Arrow />
						<SelectedBox>
							<Check $flush />浅色 - 面注释
						</SelectedBox>
					</TreeRow>
				</Tree>
			</Pane>

			<MapCol>
				<DocTabs>
					<DocTab>
						<DocThumb><Icon name="mapThumb" w={16} /></DocThumb>
						地图
						<Icon name="closeWhite" w={10} />
					</DocTab>
					<DocMenu />
				</DocTabs>
				<MapDrawing />
				<StatusBar>
					<ScaleBox>1:1,678<TinyDown /></ScaleBox>
					<StatSep />
					<StatTool $on $first><Icon name="statSnap" w={24} /></StatTool>
					<StatTool><Icon name="statInfer" w={24} /></StatTool>
					<StatTool $on><Icon name="statGrid" w={24} /></StatTool>
					<StatTool $on><Icon name="statGuide" w={24} /></StatTool>
					<StatTool><Icon name="statN" w={24} /></StatTool>
					<StatSep />
					<Coords>
						104.1738355°东 36.9590006°北
						<Chevron />
					</Coords>
					<SelCount>
						<SelSep />
						<Icon name="selected" w={22} />
						所选要素: 1
					</SelCount>
					<Pause />
					<StatSep />
					<Icon name="refresh" w={21} />
				</StatusBar>
			</MapCol>

			<Pane $w={331}>
				<PaneHead>
					修改要素
					<PaneActions>
						<span>?</span>
						<PaneDown />
						<Icon name="pin" w={13} />
						<Icon name="close" w={13} />
					</PaneActions>
				</PaneHead>
				<SearchRow>
					<Gap $w={4} />
					<SearchBox $w={293} $pad={11}>
						搜索
						<SearchTail><Icon name="search" w={15} /><TinyDown /></SearchTail>
					</SearchBox>
					<Gap $w={9} />
					<Svg width="18" height="16" viewBox="0 0 18 16"><path d="M0 2h18M0 8h18M0 14h18" stroke="#555" strokeWidth="3" /></Svg>
				</SearchRow>
				<Tabs2>
					<Tab2 $on>所有工具</Tab2>
					<Tab2>我的工具</Tab2>
				</Tabs2>
				<ToolScroll>
					<ToolList>
						<Section $h={28}><Chevron />对齐</Section>
						{alignTools.map(([icon, label, off]) => (
							<ToolRow key={label} $off={off}><Icon name={icon} w={30} />{label}</ToolRow>
						))}
						<Section $h={30}><Chevron />修整</Section>
						{reshapeTools.map(([icon, label, off]) => (
							<ToolRow key={label} $off={off}><Icon name={icon} w={30} />{label}</ToolRow>
						))}
					</ToolList>
					<Rail>
						<RailUp />
						<RailThumb />
						<RailDown />
					</Rail>
				</ToolScroll>
			</Pane>
		</Work>

		<Taskbar>
			<TaskSlot $w={60}><Icon name="win" w={22} /></TaskSlot>
			<TaskSlot $w={60}><Icon name="taskSearch" w={24} /></TaskSlot>
			<TaskSlot $w={60}><Icon name="taskView" w={24} /></TaskSlot>
			<TaskSlot $w={51} $ml={9} $run><Icon name="explorer" w={32} /></TaskSlot>
			<TaskSlot $w={50} $ml={11}><Icon name="zoomApp" w={32} /></TaskSlot>
			<TaskSlot $w={51} $ml={12} $run><Icon name="firefox" w={34} /></TaskSlot>
			<TaskSlot $w={51} $ml={11} $run><Icon name="ppt" w={32} /></TaskSlot>
			<TaskSlot $w={61} $ml={6} $run $cur><Icon name="arc" w={34} /></TaskSlot>
			<Tray>
				<TrayText $w={80}>33%<br />内存使用</TrayText>
				<Gap $w={4} />
				<TraySlot><Icon name="caret" w={18} /></TraySlot>
				<TraySlot><Icon name="guard" w={24} /></TraySlot>
				<TraySlot><Icon name="battery" w={20} /></TraySlot>
				<TraySlot><Icon name="mic" w={22} /></TraySlot>
				<TraySlot><Icon name="speaker" w={22} /></TraySlot>
				<TraySlot><Icon name="wifi" w={20} /></TraySlot>
				<TraySlot>英</TraySlot>
				<Gap $w={6} />
				<SogouS $size={20}>S</SogouS>
				<Gap $w={18} />
				<TrayText $w={92}>22:13 周六<br />2021/7/17</TrayText>
				<Gap $w={14} />
				<Icon name="notif" w={22} />
				<DeskBox />
			</Tray>
		</Taskbar>

		<SogouBar>
			<SogouBadge><SogouS $size={33}>S</SogouS></SogouBadge>
			英
			<Icon name="moon" w={19} />
			<Icon name="comma" w={19} />
			<Icon name="micBlue" w={19} />
			<Icon name="keyboard" w={19} />
			<Icon name="person" w={19} />
			<Icon name="shirt" w={19} />
			<Icon name="wrench" w={19} />
		</SogouBar>
		<SogouMini>
			<SogouS $size={18}>S</SogouS>
			<MiniMenu><MiniBar /><MiniDown /></MiniMenu>
		</SogouMini>
		<Handle />
		<DarkTab />
		<Mark>闫磊制作</Mark>
		<RedBadge>1</RedBadge>
	</Screen>
);

export default App;
